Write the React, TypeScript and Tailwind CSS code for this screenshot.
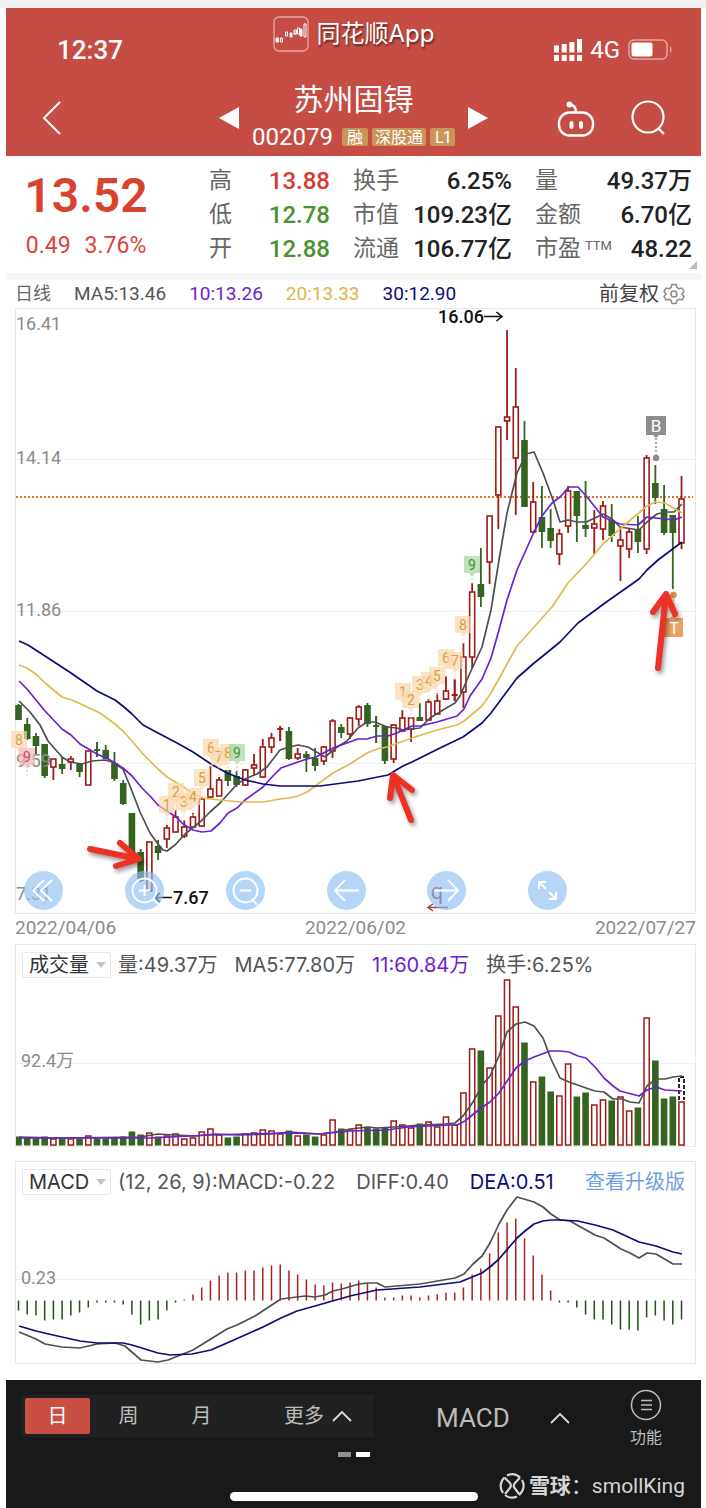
import { useState } from "react";
import type { ReactNode } from "react";

type Candle = [up: 0 | 1, high: number, top: number, bottom: number, low: number];

const FIRST_X = 18.5;
const STEP = 8.724;
const barX = (i: number) => FIRST_X + i * STEP;

const RED = "#9c1b16";
const GREEN = "#356420";

// one entry per trading day, y values in chart units
const candles: Candle[] = [
  [0, 704, 705, 720, 720], [0, 718, 724, 739, 740], [0, 733, 736, 746, 754], [0, 744, 744, 776, 778],
  [1, 759, 759, 767, 780], [0, 757, 764, 769, 774], [1, 756, 759, 762, 770], [0, 764, 764, 772, 777],
  [1, 751, 751, 785, 785], [0, 742, 750, 751, 757], [0, 745, 750, 759, 759], [0, 752, 763, 779, 781],
  [0, 780, 783, 804, 805], [0, 813, 813, 853, 853], [0, 849, 852, 881, 882], [1, 842, 842, 891, 891],
  [0, 840, 846, 853, 860], [1, 825, 828, 839, 848], [1, 810, 817, 832, 832], [1, 820, 827, 836, 838],
  [1, 813, 817, 827, 828], [1, 797, 799, 826, 827], [1, 766, 789, 797, 798], [1, 777, 780, 796, 796],
  [0, 770, 770, 781, 786], [0, 771, 776, 785, 787], [1, 769, 770, 785, 786], [1, 754, 765, 768, 776],
  [1, 739, 747, 777, 778], [1, 733, 738, 747, 753], [1, 726, 729, 730, 741], [0, 727, 731, 759, 760],
  [1, 748, 754, 758, 760], [0, 751, 754, 758, 772], [0, 748, 758, 766, 771], [1, 746, 747, 761, 765],
  [1, 719, 721, 751, 758], [0, 724, 727, 733, 738], [1, 717, 718, 734, 739], [1, 705, 707, 719, 726],
  [0, 703, 705, 724, 727], [0, 716, 726, 727, 743], [0, 726, 726, 761, 764], [1, 724, 725, 759, 763],
  [1, 710, 718, 731, 732], [1, 717, 718, 729, 742], [0, 703, 717, 721, 721], [1, 699, 702, 720, 720],
  [1, 693, 701, 714, 715], [1, 676, 691, 699, 700], [1, 679, 695, 696, 701], [1, 643, 657, 692, 708],
  [1, 583, 592, 657, 668], [0, 548, 584, 597, 607], [1, 516, 516, 562, 584], [1, 426, 427, 495, 529],
  [1, 330, 417, 421, 440], [1, 368, 407, 458, 515], [0, 421, 440, 507, 507], [1, 482, 502, 532, 533],
  [0, 486, 517, 532, 548], [0, 509, 528, 541, 548], [1, 529, 534, 554, 565], [1, 486, 491, 526, 533],
  [0, 491, 491, 516, 542], [0, 481, 525, 529, 537], [1, 510, 524, 528, 554], [1, 501, 506, 529, 540],
  [0, 504, 520, 536, 542], [1, 527, 540, 546, 581], [1, 529, 532, 549, 558], [0, 516, 529, 542, 553],
  [1, 455, 458, 549, 554], [0, 465, 483, 498, 504], [0, 485, 509, 533, 535], [0, 515, 515, 533, 589],
  [1, 476, 499, 543, 549],
];

const volumes = [
  9, 8, 7, 9, 7, 7, 7, 7, 10, 7, 7, 8, 9, 14, 11, 13, 9, 10, 12, 7, 8, 14, 17, 11, 8, 9, 12, 13, 16, 15, 12, 15,
  10, 11, 9, 11, 26, 17, 16, 21, 18, 17, 18, 25, 21, 18, 22, 24, 19, 29, 21, 53, 97, 95, 78, 130, 166, 139, 103,
  64, 69, 54, 50, 82, 49, 53, 41, 46, 45, 49, 35, 38, 128, 85, 47, 49, 44,
];

const macd = [
  -10, -14, -15, -20, -19, -19, -15, -12, -7, -2, -2, -2, -4, -14, -24, -20, -19, -10, -2, 1, 6, 13, 20, 25, 28, 28,
  30, 30, 33, 35, 36, 30, 26, 21, 16, 15, 18, 17, 18, 20, 17, 13, 3, 3, 5, 5, 3, 5, 6, 8, 8, 13, 26, 32, 47, 68, 78,
  82, 62, 45, 26, 10, -2, -2, -7, -14, -19, -19, -24, -29, -29, -30, -17, -15, -20, -24, -19,
];

const priceLines = [
  {
    color: "#4d4f50",
    points:
      "19,701 30,712 40,725 48,741 62,757 70,762 82,764 92,761 105,760 112,762 123,769 130,786 140,812 150,833 158,844 163,850 167,851 175,845 185,834 200,822 210,812 220,803 230,792 237,784 247,778 257,774 267,767 280,750 289,747 298,745 308,747 325,757 337,747 347,741 358,728 367,722 375,722 387,727 397,728 403,730 420,728 430,718 443,710 455,703 460,696 470,673 482,647 491,610 499,560 507,513 517,473 526,454 534,452 543,473 553,500 560,522 568,520 577,522 586,522 595,518 603,514 612,519 620,527 639,530 647,522 657,514 665,512 674,512 682,504",
  },
  {
    color: "#6a22d0",
    points:
      "19,681 27,689 45,711 62,729 71,735 80,744 97,754 110,760 115,763 123,768 132,776 142,788 150,796 158,805 167,811 176,817 183,824 193,830 202,832 211,831 220,823 228,813 237,808 245,800 263,787 272,777 281,768 298,762 307,759 316,757 333,748 358,739 367,739 377,736 388,736 397,733 412,726 420,726 437,722 457,716 464,709 470,696 482,679 491,658 499,630 507,600 517,570 534,532 542,516 552,503 560,497 569,487 578,487 587,497 603,517 620,524 638,525 647,517 656,518 674,520 682,517",
  },
  {
    color: "#e3b84e",
    points:
      "19,665 27,668 37,675 45,683 62,697 72,700 87,707 100,713 115,724 123,731 132,741 142,753 158,769 167,777 193,793 202,798 220,800 240,802 263,802 280,799 289,798 298,796 307,792 333,773 350,764 367,753 377,749 387,747 412,738 437,730 457,725 464,721 470,716 482,706 491,693 517,646 552,607 568,583 587,563 603,544 628,522 647,506 656,502 665,503 682,513",
  },
  {
    color: "#0b0b7c",
    points:
      "19,641 28,645 45,656 71,673 97,691 115,700 124,707 132,714 143,725 158,733 177,743 193,752 211,764 227,773 245,780 263,784 280,786 297,786 320,786 358,781 388,775 403,766 412,762 440,748 463,737 482,723 491,713 517,678 533,664 560,642 578,623 605,603 639,579 647,570 658,560 682,542",
  },
];

const volumeLines = [
  {
    color: "#4d4f50",
    points:
      "19,1138 60,1139 140,1138 158,1135 175,1136 195,1137 215,1135 240,1136 270,1135 290,1133 320,1135 335,1133 350,1130 359,1129 368,1128 377,1129 394,1128 420,1126 445,1125 455,1124 463,1117 473,1103 483,1085 490,1077 499,1057 507,1033 516,1025 525,1023 534,1027 543,1039 551,1060 560,1079 569,1083 586,1089 595,1092 604,1093 613,1100 622,1100 630,1103 639,1104 647,1087 656,1080 665,1080 673,1078 682,1077",
  },
  {
    color: "#6a22d0",
    points:
      "19,1139 150,1139 210,1136 290,1134 320,1135 350,1132 387,1131 408,1128 450,1126 457,1126 465,1122 481,1109 490,1103 499,1094 516,1069 525,1062 534,1058 550,1052 560,1052 569,1053 578,1057 586,1059 595,1068 604,1079 613,1087 620,1092 639,1097 647,1091 656,1088 665,1091 682,1092",
  },
];

const macdLines = [
  {
    color: "#4d4f50",
    points:
      "19,1332 36,1339 45,1344 62,1347 80,1348 97,1344 115,1343 125,1346 141,1360 158,1362 168,1360 193,1350 227,1329 237,1325 255,1316 281,1299 305,1296 315,1297 325,1295 333,1291 342,1289 359,1284 368,1283 377,1283 385,1287 420,1284 455,1278 464,1274 473,1264 482,1256 490,1243 499,1224 507,1210 517,1197 534,1202 543,1207 551,1214 560,1220 570,1221 586,1230 595,1235 604,1238 621,1249 630,1253 639,1258 647,1253 656,1254 673,1264 682,1264",
  },
  {
    color: "#0b0b7c",
    points:
      "19,1326 36,1331 53,1335 80,1341 97,1343 123,1343 132,1345 158,1353 170,1355 192,1354 211,1350 227,1343 263,1327 281,1318 297,1311 315,1306 350,1296 368,1292 377,1290 420,1287 460,1282 482,1273 490,1267 499,1259 517,1238 525,1231 534,1224 543,1221 551,1220 560,1220 578,1221 595,1225 613,1230 639,1242 656,1246 673,1252 682,1254",
  },
];

type Tone = "orange" | "pink" | "green";
const tones: Record<Tone, { bg: string; fg: string }> = {
  orange: { bg: "#f9d9ae", fg: "#dc9c4a" },
  pink: { bg: "#f5b3ba", fg: "#d6454f" },
  green: { bg: "#a5d79c", fg: "#3c9338" },
};

const counts: { n: number; x: number; y: number; tone?: Tone }[] = [
  { n: 8, x: 19, y: 740 },
  { n: 9, x: 27, y: 757, tone: "pink" },
  { n: 1, x: 167, y: 805 },
  { n: 2, x: 176, y: 792 },
  { n: 3, x: 184, y: 802 },
  { n: 4, x: 193, y: 797 },
  { n: 5, x: 202, y: 778 },
  { n: 6, x: 211, y: 748 },
  { n: 7, x: 219, y: 757 },
  { n: 8, x: 228, y: 753 },
  { n: 9, x: 237, y: 753, tone: "green" },
  { n: 1, x: 403, y: 692 },
  { n: 2, x: 411, y: 700 },
  { n: 3, x: 420, y: 685 },
  { n: 4, x: 429, y: 681 },
  { n: 5, x: 437, y: 676 },
  { n: 6, x: 446, y: 658 },
  { n: 7, x: 455, y: 661 },
  { n: 8, x: 463, y: 625 },
  { n: 9, x: 472, y: 565, tone: "green" },
];

const quotes = [
  [
    { label: "高", value: "13.88", color: "text-[#d63a2e]" },
    { label: "低", value: "12.78", color: "text-[#4a9130]" },
    { label: "开", value: "12.88", color: "text-[#4a9130]" },
  ],
  [
    { label: "换手", value: "6.25%" },
    { label: "市值", value: "109.23亿" },
    { label: "流通", value: "106.77亿" },
  ],
  [
    { label: "量", value: "49.37万" },
    { label: "金额", value: "6.70亿" },
    { label: "市盈", value: "48.22", sup: "TTM" },
  ],
] as { label: string; value: string; color?: string; sup?: string }[][];

const din = "font-['Roboto','Noto_Sans_CJK_SC',sans-serif]";
const sans = "font-['Inter','Noto_Sans_CJK_SC',sans-serif]";

function Lines({ lines }: { lines: { color: string; points: string }[] }) {
  return (
    <g fill="none" strokeWidth="1.7" strokeLinejoin="round">
      {lines.map((l, i) => (
        <polyline key={i} points={l.points} stroke={l.color} />
      ))}
    </g>
  );
}

function CountTag({ n, x, y, tone = "orange" }: { n: number; x: number; y: number; tone?: Tone }) {
  const { bg, fg } = tones[tone];
  return (
    <g>
      <path d={`M${x - 8} ${y - 9}h16v17h-5l-3 4l-3 -4h-5z`} fill={bg} opacity="0.7" />
      <path d={`M${x} ${y + 13}v6`} stroke={bg} strokeDasharray="2 2" />
      <text x={x} y={y + 5} fontSize="14" textAnchor="middle" fill={fg}>
        {n}
      </text>
    </g>
  );
}

function PriceChart() {
  return (
    <svg viewBox="16 309 679 604" className={`block h-auto w-full overflow-visible ${din}`} role="img" aria-label="日线">
      <g stroke="#efefef">
        <path d="M16 459.5H695M16 611.5H695M16 763.5H695" />
      </g>
      <path d="M16 497H693" stroke="#d9742a" strokeWidth="2" strokeDasharray="2 2" />

      {candles.map(([up, high, top, bottom, low], i) => {
        const x = barX(i);
        const color = up ? RED : GREEN;
        return (
          <g key={i}>
            <path d={`M${x} ${high}V${top}M${x} ${bottom}V${low}`} stroke={color} strokeWidth="1.8" />
            {bottom - top <= 1 ? (
              <path d={`M${x - 3} ${top}h6M${x} ${high}V${low}`} stroke={color} strokeWidth="1.8" />
            ) : up ? (
              <rect x={x - 2.5} y={top} width="5" height={bottom - top} fill="#fff" stroke={color} strokeWidth="1.6" />
            ) : (
              <rect x={x - 3.3} y={top} width="6.6" height={bottom - top} fill={color} />
            )}
          </g>
        );
      })}

      <Lines lines={priceLines} />

      <g fontSize="18" fill="#8b8b8b">
        <text x="16" y="330">16.41</text>
        <text x="16" y="464">14.14</text>
        <text x="16" y="616">11.86</text>
        <text x="16" y="767">9.59</text>
        <text x="16" y="900">7.31</text>
      </g>

      {counts.map((c, i) => (
        <CountTag key={i} {...c} />
      ))}

      <g fontSize="18" fontWeight="500" fill="#111">
        <text x="438" y="323">16.06</text>
        <text x="173" y="904">7.67</text>
      </g>
      <g fill="none" stroke="#111" strokeWidth="1.6">
        <path d="M484 316.500H502M496.500 312L502 316.500L496.500 321" />
        <path d="M172 897.500H155M160 893L155 897.500L160 902" />
      </g>

      {/* buy / sell marks */}
      <path d="M646 416h20v19h-7l-3 3l-3 -3h-7z" fill="#8d8d8d" />
      <text x="656" y="432" fontSize="17" textAnchor="middle" fill="#fff">B</text>
      <path d="M656 438V455" stroke="#8d8d8d" strokeWidth="1.5" strokeDasharray="2 2" />
      <circle cx="656" cy="458" r="3.300" fill="#8d8d8d" />
      <path d="M664 618h6l3 -3l3 3h7v19h-19z" fill="#e8a263" />
      <text x="674" y="634" fontSize="17" textAnchor="middle" fill="#fff">T</text>
      <circle cx="673.500" cy="595" r="3.300" fill="#de9150" />
      <path d="M673.500 599V615" stroke="#de9150" strokeDasharray="2 2" />

      <text x="437" y="899" fontSize="22" textAnchor="middle" fill="#a02a4a">q</text>
      <path d="M448 907.500H428M433 904L428 907.500L433 911" fill="none" stroke="#b23b30" strokeWidth="1.500" />

      <g
        fill="none"
        stroke="#ee3124"
        strokeWidth="6"
        strokeLinecap="round"
        strokeLinejoin="round"
        className="drop-shadow-[2px_3px_2px_rgba(0,0,0,0.4)]"
      >
        <path d="M90 849L139 859M120 843L139 859L116 866" />
        <path d="M411 820L393 775M412 790L393 775L390 798" />
        <path d="M658 668L666 594M653 612L666 594L675 614" />
      </g>
    </svg>
  );
}

function VolumeChart() {
  return (
    <svg viewBox="16 980 679 167" className={`block h-auto w-full ${din}`} role="img" aria-label="成交量">
      <path d="M16 1064.500H695" stroke="#efefef" />
      <text x="21" y="1068" fontSize="18" fill="#8b8b8b">92.4万</text>
      {volumes.map((v, i) => {
        const x = barX(i);
        return candles[i][0] ? (
          <rect key={i} x={x - 2.6} y={1147 - v} width="5.2" height={v - 1} fill="#fff" stroke={RED} strokeWidth="1.5" />
        ) : (
          <rect key={i} x={x - 3.3} y={1146.5 - v} width="6.6" height={v} fill={GREEN} />
        );
      })}
      <path d="M679 1101V1078H684V1101" fill="none" stroke="#111" strokeWidth="1.800" strokeDasharray="4 2" />
      <Lines lines={volumeLines} />
    </svg>
  );
}

function MacdChart() {
  return (
    <svg viewBox="16 1196 679 167" className={`block h-auto w-full ${din}`} role="img" aria-label="MACD">
      <path d="M16 1279.500H695" stroke="#efefef" />
      <text x="21" y="1284" fontSize="18" fill="#8b8b8b">0.23</text>
      {macd.map((v, i) => (
        <path key={i} d={`M${barX(i)} 1300.500v${-v}`} stroke={v > 0 ? "#a8201a" : "#1f4f14"} strokeWidth="1.500" />
      ))}
      <Lines lines={macdLines} />
    </svg>
  );
}

function IndicatorSelect({ label, options }: { label: string; options: string[] }) {
  return (
    <label className="relative flex h-[26px] items-center rounded-xs border border-[#e8e8e8]">
      <span className="sr-only">{label}</span>
      <select className="h-8 shrink-0 appearance-none bg-transparent pr-5 pl-[6px] text-xl leading-8 text-[#333]">
        {options.map((o) => (
          <option key={o}>{o}</option>
        ))}
      </select>
      <svg viewBox="0 0 10 6" className="pointer-events-none absolute top-[9px] right-1 h-[6px] w-[10px]">
        <path d="M0 0H10L5 6z" fill="#c4c4c4" />
      </svg>
    </label>
  );
}

function ChartButton({ label, children }: { label: string; children: ReactNode }) {
  return (
    <button aria-label={label} className="size-[39px] rounded-full bg-[#8fc0f5]/65">
      <svg viewBox="0 0 39 39" fill="none" stroke="#fff" strokeWidth="1.800" className="size-full">
        {children}
      </svg>
    </button>
  );
}

function Caret() {
  return (
    <svg viewBox="0 0 20 12" fill="none" stroke="#ddd" strokeWidth="1.800" className="h-3 w-5">
      <path d="M1 11L10 2L19 11" />
    </svg>
  );
}

function Header() {
  return (
    <header className="bg-[#c54d44] text-white">
      <div className="grid grid-cols-3 items-start">
        <span className={`pt-[27px] pl-[51px] text-[26px] leading-[30px] font-medium ${din}`}>12:37</span>
        <div className="flex items-center justify-center gap-2 pt-2 whitespace-nowrap">
          <svg viewBox="0 0 36 36" className="size-9" fill="none" stroke="#fff">
            <rect x="1" y="1" width="34" height="34" rx="5" stroke="#e8a9a4" strokeWidth="1.300" />
            <path d="M3 22h2.500v4H3zM27 13h2v7h-2zM17 17h2v4h-2zM22 15v4" fill="#fff" />
            <path d="M7.500 22h2v4h-2zM12.500 16h2v4h-2zM21 14h2.500v4H21zM24.500 12h2v6h-2zM31 8h2v13h-2z" />
          </svg>
          <span className={`text-2xl leading-9 text-shadow-[1px_2px_2px_rgba(0,0,0,0.5)] ${sans}`}>同花顺App</span>
        </div>
        <div className="flex items-center justify-end gap-2 pt-7 pr-7">
          <svg viewBox="0 0 28 22" className="h-[22px] w-7" stroke="#fff" strokeWidth="5" strokeLinejoin="round">
            <path d="M2.500 6.500v7M10.200 5v8.500M17.900 3v10.500M25.500 0v13.500M2.500 16v6M10.200 16v6M17.900 16v6M25.500 16v6" />
          </svg>
          <span className={`text-2xl leading-7 ${din}`}>4G</span>
          <svg viewBox="0 0 45 22" className="h-[22px] w-[45px]" fill="none">
            <rect x="1" y="1" width="38" height="19" rx="5" stroke="#e5a39e" strokeWidth="1.500" />
            <rect x="3.500" y="3.500" width="21" height="14" rx="2" fill="#fff" />
            <path d="M42 7c2 1 2 6 0 7z" fill="#e5a39e" />
          </svg>
        </div>
      </div>
      <div className="grid grid-cols-[1fr_auto_1fr] items-center pt-4 pb-px">
        <button aria-label="返回" className="ml-9 w-5">
          <svg viewBox="0 0 20 36" fill="none" stroke="#fff" strokeWidth="2" className="h-9 w-5">
            <path d="M18 2L2 18L18 34" />
          </svg>
        </button>
        <div className="flex items-center gap-[13px]">
          <button aria-label="上一只">
            <svg viewBox="0 0 20 22" className="h-[22px] w-5" fill="#fff">
              <path d="M20 0V22L0 11z" />
            </svg>
          </button>
          <div className="flex flex-col items-center gap-[2px]">
            <h1 className={`text-[30px] leading-9 ${sans}`}>苏州固锝</h1>
            <div className="flex items-center gap-1">
              <span className={`mr-[5px] text-2xl leading-9 ${din}`}>002079</span>
              <span className={`rounded-xs bg-[#c99458] px-[5px] text-base leading-[18px] ${sans}`}>融</span>
              <span className={`rounded-xs bg-[#c99458] px-[3px] text-base leading-[18px] ${sans}`}>深股通</span>
              <span className={`rounded-xs bg-[#c99458] px-[5px] text-base leading-[18px] ${sans}`}>L1</span>
            </div>
          </div>
          <button aria-label="下一只">
            <svg viewBox="0 0 20 22" className="h-[22px] w-5" fill="#fff">
              <path d="M0 0V22L20 11z" />
            </svg>
          </button>
        </div>
        <div className="flex items-center justify-end gap-9 pr-9">
          <button aria-label="助手">
            <svg viewBox="0 0 38 38" className="size-[38px]" fill="none" stroke="#fff" strokeWidth="2.400">
              <rect x="2" y="13.500" width="34" height="23" rx="10.500" />
              <path d="M19 13C19 9 17 6 12.500 5.500" />
              <circle cx="12.500" cy="5.500" r="1.700" fill="#fff" />
              <path d="M14.500 24v4M24 24v4" strokeWidth="4" strokeLinecap="round" />
            </svg>
          </button>
          <button aria-label="搜索">
            <svg viewBox="0 0 34 36" className="h-9 w-[34px]" fill="none" stroke="#fff" strokeWidth="2.200">
              <circle cx="17" cy="17" r="15.500" />
              <path d="M27 28L33 34" />
            </svg>
          </button>
        </div>
      </div>
    </header>
  );
}

function Quote() {
  return (
    <section className={`relative grid grid-cols-[180fr_121fr_159fr_157fr] gap-x-[23px] pt-2 pr-[9px] pb-[7px] ${din}`}>
      <div className="flex flex-col items-center pr-5 whitespace-nowrap">
        <strong className="pt-1 text-5xl leading-[56px] font-semibold text-[#d9422f]">13.52</strong>
        <p className="flex gap-[14px] pt-[6px] text-[23px] leading-8 text-[#d9443c]">
          <span>0.49</span>
          <span>3.76%</span>
        </p>
      </div>
      {quotes.map((col, i) => (
        <dl key={i}>
          {col.map((q) => (
            <div key={q.label} className="flex justify-between whitespace-nowrap">
              <dt className="text-[23px] leading-[34px] text-[#666]">
                {q.label}
                {q.sup && <sup className="pl-1 text-[13px] leading-none">{q.sup}</sup>}
              </dt>
              <dd className={`text-2xl leading-[34px] font-medium ${q.color ?? "text-[#222]"}`}>{q.value}</dd>
            </div>
          ))}
        </dl>
      ))}
      <svg viewBox="0 0 8 8" className="absolute right-1 bottom-1 size-2">
        <path d="M8 0V8H0z" fill="#bbb" />
      </svg>
    </section>
  );
}

const periods = ["日", "周", "月"];

function Footer() {
  const [period, setPeriod] = useState("日");
  return (
    <footer className={`mt-4 bg-[#191919] pt-[15px] text-[#bdbdbd] ${din}`}>
      <div className="flex items-start">
        <div className="ml-[15px] flex h-[42px] w-[353px] items-center bg-[#212121] pl-1 text-xl">
          {periods.map((p) => (
            <button
              key={p}
              onClick={() => setPeriod(p)}
              className={
                p === period
                  ? "mr-[2px] h-9 w-[65px] rounded-xs bg-[#c94f45] text-white"
                  : "h-9 w-[73px]"
              }
            >
              {p}
            </button>
          ))}
          <button className="ml-auto flex items-center gap-2 pr-[22px]">
            更多
            <Caret />
          </button>
        </div>
        <button className="ml-[62px] flex h-[46px] items-center gap-10 text-[26px]">
          MACD
          <Caret />
        </button>
        <button className="mt-[-6px] mr-[39px] ml-auto flex flex-col items-center text-base leading-7">
          <svg viewBox="0 0 32 32" className="size-8" fill="none" stroke="#bdbdbd" strokeWidth="1.500">
            <circle cx="16" cy="16" r="14.500" />
            <path d="M11 11.500h11M11 16h11M11 20.500h11" />
          </svg>
          <span className="pt-[3px]">功能</span>
        </button>
      </div>
      <div className="flex justify-center gap-[5px]">
        <span className="h-[5px] w-[13px] bg-[#8f8f8f]" />
        <span className="h-[5px] w-[14px] bg-white" />
      </div>
      <div className="relative flex h-[53px] items-end justify-center pb-[9px]">
        <span className="h-[9px] w-[248px] rounded-full bg-white" />
        <div className={`absolute right-4 bottom-2 flex items-center gap-1 text-[21px] leading-8 text-[#d5d5d5] ${din}`}>
          <svg viewBox="0 0 26 26" className="size-[26px]" fill="none" stroke="#d5d5d5" strokeWidth="2.200">
            <path d="M8 2.500A11.500 11.500 0 0 1 21 4.500M23 7A11.500 11.500 0 0 1 20 22M18 23.500A11.500 11.500 0 0 1 6 22M4 20A11.500 11.500 0 0 1 5.500 4.500" />
            <path d="M5.500 4.500L11 10Q13 13 10.500 15.500L6 21M21 4.500L16 10Q13.500 13 16 15.500L20 21" />
          </svg>
          <span>
            <b>雪球</b>：smollKing
          </span>
        </div>
      </div>
    </footer>
  );
}

export default function App() {
  return (
    <div className="bg-white">
      <div className="h-2 bg-[#f0f0f0]" />
      <div className="mr-[5px] ml-[6px]">
        <Header />
        <Quote />
        <div className="h-[7px] bg-[#f5f5f5]" />

        <div className={`flex h-7 items-center gap-[23px] pr-4 pl-[9px] text-[19px] whitespace-nowrap ${din}`}>
          <span className="text-lg text-[#666]">日线</span>
          <span className="text-[#555]">MA5:13.46</span>
          <span className="text-[#6a22d0]">10:13.26</span>
          <span className="text-[#e0b548]">20:13.33</span>
          <span className="text-[#0b0b7c]">30:12.90</span>
          <button className="ml-auto flex items-center gap-1 text-xl text-[#444]">
            前复权
            <svg viewBox="0 0 22 22" className="size-[22px]" fill="none" stroke="#8a8a8a" strokeWidth="1.500">
              <path d="M9 1.500h4l1 3l2 1.200l3-.7l2 3.500l-2 2.500l2 2.500l-2 3.500l-3-.7l-2 1.200l-1 3H9l-1-3l-2-1.200l-3 .7l-2-3.500l2-2.500l-2-2.500l2-3.500l3 .7l2-1.200z" />
              <circle cx="11" cy="11" r="3" />
            </svg>
          </button>
        </div>

        <main className="mr-[5px] ml-[9px]">
          <div className="relative border border-[#e8e8e8]">
            <PriceChart />
            <div className="absolute bottom-[3px] left-[1.2%] flex w-[80%] justify-between">
              <ChartButton label="最早">
                <path d="M20 9L9 19.500L20 30M28 9L17 19.500L28 30" />
              </ChartButton>
              <ChartButton label="放大">
                <circle cx="19.500" cy="19.500" r="12" />
                <path d="M28 28L34 34M14 19.500h11M19.500 14v11" />
              </ChartButton>
              <ChartButton label="缩小">
                <circle cx="19.500" cy="19.500" r="12" />
                <path d="M26 28L31 34M14 19.500h11" />
              </ChartButton>
              <ChartButton label="向左">
                <path d="M32 19.500H8M18 9L8 19.500L18 30" />
              </ChartButton>
              <ChartButton label="向右">
                <path d="M7 19.500H31M21 9L31 19.500L21 30" />
              </ChartButton>
              <ChartButton label="全屏">
                <path d="M11 18V11H18M11 11L18 18M28 21V28H21M28 28L21 21" />
              </ChartButton>
            </div>
          </div>
          <div className={`flex h-[30px] justify-between text-[19px] leading-[27px] text-[#8b8b8b] ${din}`}>
            <span>2022/04/06</span>
            <span>2022/06/02</span>
            <span>2022/07/27</span>
          </div>

          <section className="border border-[#e8e8e8]">
            <div className={`flex h-[34px] items-center gap-[17px] pt-[6px] pl-[6px] text-xl whitespace-nowrap text-[#555] ${sans}`}>
              <IndicatorSelect label="副图指标一" options={["成交量", "MACD"]} />
              <span className="-ml-[10px]">量:49.37万</span>
              <span>MA5:77.80万</span>
              <span className="text-[#6a22d0]">11:60.84万</span>
              <span>换手:6.25%</span>
            </div>
            <VolumeChart />
          </section>

          <section className="mt-[14px] border border-[#e8e8e8]">
            <div className={`flex h-[34px] items-center gap-[21px] pt-[6px] pr-[10px] pl-[6px] text-xl whitespace-nowrap text-[#555] ${sans}`}>
              <IndicatorSelect label="副图指标二" options={["MACD", "成交量"]} />
              <span className="-ml-[14px]">(12, 26, 9):MACD:-0.22</span>
              <span>DIFF:0.40</span>
              <span className="text-[#0b0b7c]">DEA:0.51</span>
              <a href="#upgrade" className="ml-auto text-xl text-[#6f9fe0]">
                查看升级版
              </a>
            </div>
            <MacdChart />
          </section>
        </main>

        <Footer />
      </div>
    </div>
  );
}
